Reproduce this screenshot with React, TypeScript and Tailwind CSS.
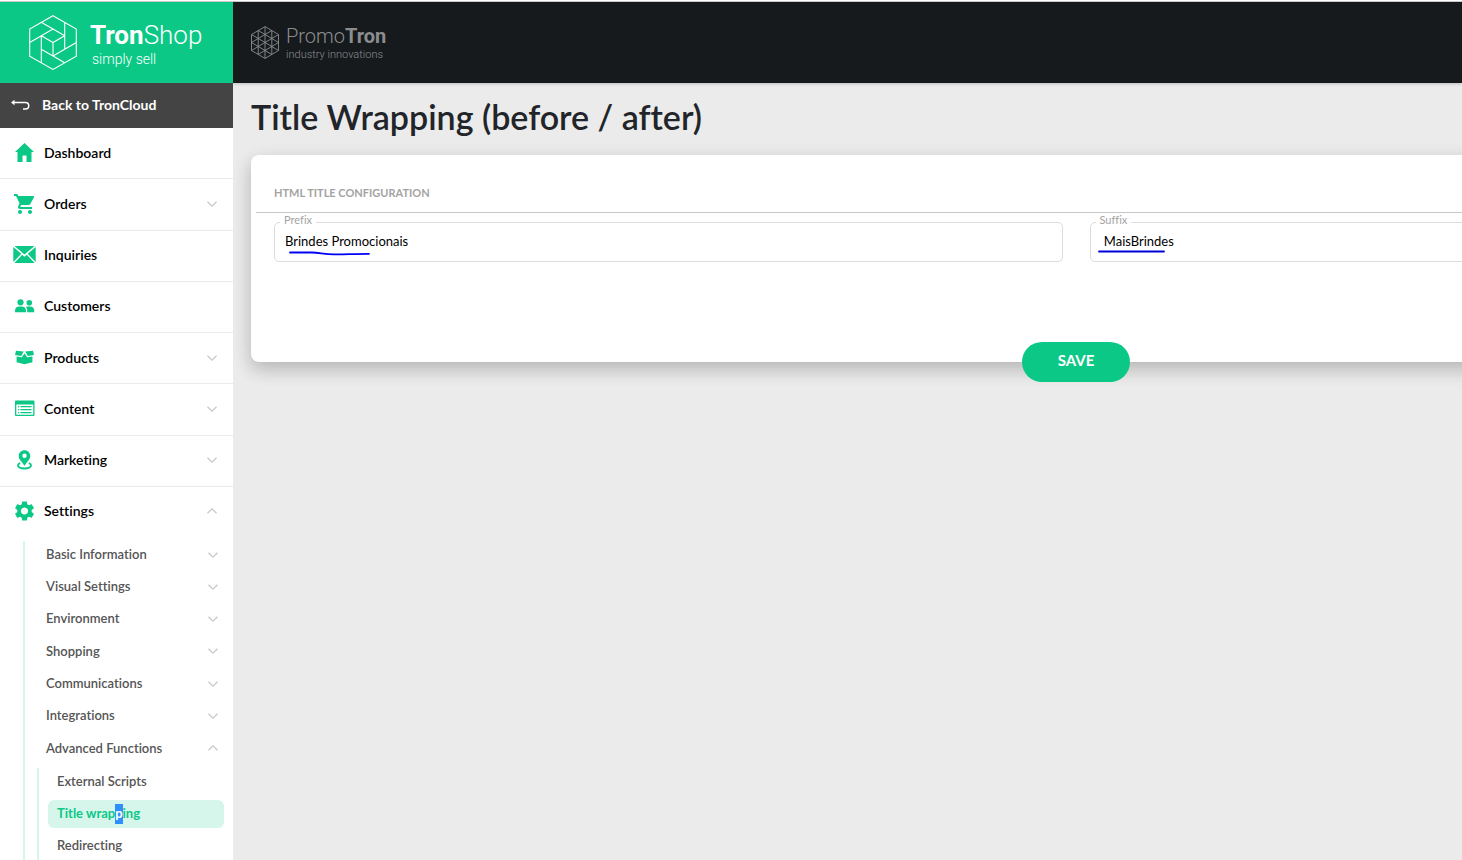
import type { ReactNode } from "react";
import { MdSettings, MdShoppingCart } from "react-icons/md";

const HomeIcon = () => (
    <svg viewBox="0 0 24 24" className="size-6" fill="currentColor">
        <path d="M12.5 2 3 11h2.5v10h5v-6.5h4V21h5V11H22z" />
    </svg>
);

const MailIcon = () => (
    <svg viewBox="0 0 24 24" className="size-6" fill="currentColor">
        <path d="M2.500 3h20l-10 8.600zM1.300 4v15l8-8.200zM23.700 4v15l-8-8.200zM2.300 20l7.900-8.200 2.300 2 2.300-2 7.900 8.200z" />
    </svg>
);

const PeopleIcon = () => (
    <svg viewBox="0 0 24 24" className="size-6" fill="currentColor">
        <circle cx="8.5" cy="8.300" r="3.100" />
        <circle cx="17.300" cy="8.800" r="2.800" />
        <path d="M3 18.300v-1.600c0-2.600 1.800-4.200 4.300-4.200h2.400c2.500 0 4.300 1.600 4.300 4.200v1.600zM15.200 18.300v-1.600c0-1.700-.4-3.100-1.400-4 .7-.2 1.400-.3 2.100-.3h2.400c2.200 0 3.900 1.500 3.900 3.900v2z" />
    </svg>
);

const BoxIcon = () => (
    <svg viewBox="0 0 24 24" className="size-6" fill="currentColor">
        <path d="M4 4.800 11.800 5.400 9.200 10 3 9zM21 4.800l-7.800.6L15.800 10 22 9z" />
        <path d="M4.600 10.400l5.300.9 2.600-4 2.600 4 5.300-.9v5.900l-7.900 1.900-7.900-1.900z" />
    </svg>
);

const ListIcon = () => (
    <svg viewBox="0 0 24 24" className="size-6" fill="currentColor">
        <path fillRule="evenodd" d="M4 3.500h17.500a1 1 0 0 1 1 1V18a1 1 0 0 1-1 1H4a1 1 0 0 1-1-1V4.500a1 1 0 0 1 1-1zM4.300 7.500v10.200h16.900V7.500z" />
        <path d="M6 9h1.300v1.300H6zM8.500 9H19.500v1.300h-11zM6 12h1.300v1.300H6zM8.500 12h11v1.300h-11zM6 15h1.300v1.300H6zM8.500 15h11v1.300h-11z" />
    </svg>
);

const PinIcon = () => (
    <svg viewBox="0 0 24 24" className="size-6" fill="currentColor">
        <path fillRule="evenodd" d="M12.500 2.200c-3.300 0-5.800 2.500-5.800 5.700 0 3.900 4.200 6.400 5.800 9.900 1.600-3.500 5.800-6 5.800-9.900 0-3.200-2.500-5.700-5.800-5.700zm0 3.400a2.200 2.200 0 1 1 0 4.400 2.200 2.200 0 0 1 0-4.400z" />
        <path d="M8.200 15.100c-1.900.7-2.200 1.600-2.200 2.200 0 1.900 2.900 3.200 6.500 3.200s6.500-1.300 6.500-3.200c0-.6-.3-1.500-2.200-2.200" fill="none" stroke="currentColor" strokeWidth="1.900" />
    </svg>
);

const Chevron = ({ up = false }: { up?: boolean }) => (
    <svg viewBox="0 0 10 6" className="w-[10px] h-[6px] shrink-0" fill="none" stroke="#c9c9c9" strokeWidth="1.300">
        <path d={up ? "M.5 5.300 5 .9l4.500 4.400" : "M.5.7 5 5.100 9.500.7"} />
    </svg>
);

const ShopLogo = () => (
    <svg viewBox="0 0 48 55" className="w-12 h-[55px]" fill="none" stroke="#fff" strokeWidth="1.100">
        <path d="M24 .7 47.300 14v27.200L24 54.400.7 41.200V14z" />
        <path d="M35.700 7.300v26.900M12.300 7.300l23.400 13.500M.7 27.500 24 14M12.300 47.800V20.800M35.700 47.800 12.300 34.200M47.300 27.500 24 41" />
        <path d="M24 27.500 35.700 20.800M24 27.500V41M24 27.500 12.300 20.800" />
    </svg>
);

const PromoLogo = () => (
    <svg viewBox="0 0 28 33" className="w-7 h-[33px]" fill="none" stroke="#8b8d8f" strokeWidth=".9">
        <path d="M14 .6 27.500 8.500v16L14 32.400.5 24.500v-16z" />
        <path d="M14 .6v31.800M7.200 4.500v24M20.800 4.500v24M.5 8.500l27 16M27.500 8.500l-27 16M7.200 4.500l20.300 12M20.800 4.500.5 16.500M.5 16.500l20.300 12M27.500 16.500l-20.300 12" />
    </svg>
);

type Item = { label: string; icon: ReactNode; arrow?: "up" | "down" };

const menu: Item[] = [
    { label: "Dashboard", icon: <HomeIcon /> },
    { label: "Orders", icon: <MdShoppingCart className="size-6" viewBox="-1 0 24 24" />, arrow: "down" },
    { label: "Inquiries", icon: <MailIcon /> },
    { label: "Customers", icon: <PeopleIcon /> },
    { label: "Products", icon: <BoxIcon />, arrow: "down" },
    { label: "Content", icon: <ListIcon />, arrow: "down" },
    { label: "Marketing", icon: <PinIcon />, arrow: "down" },
    { label: "Settings", icon: <MdSettings className="size-6" viewBox="-0.5 0 24 24" />, arrow: "up" },
];

const settings = [
    "Basic Information",
    "Visual Settings",
    "Environment",
    "Shopping",
    "Communications",
    "Integrations",
    "Advanced Functions",
];

const Sidebar = () => (
    <aside className="flex flex-col w-[233px] shrink-0 bg-white">
        <a href="#" className="flex items-center h-[81px] shrink-0 gap-[13px] pl-[29px] bg-[#0bc886] text-white font-[Roboto,sans-serif]">
            <ShopLogo />
            <span className="flex flex-col">
                <span className="text-[26px] leading-8 font-light"><b className="font-bold">Tron</b>Shop</span>
                <span className="pl-[2px] text-sm leading-4 font-light">simply sell</span>
            </span>
        </a>
        <a href="#" className="flex items-center h-[45px] shrink-0 gap-3 pl-[11px] pb-[2px] bg-[#444] text-white text-sm font-bold">
            <svg viewBox="0 0 19 12" className="w-[19px] h-3" fill="none" stroke="#fff" strokeWidth="1.500">
                <path d="M3 3.500h11.500a3.200 3.200 0 0 1 0 6.500H12" />
                <path d="M0 3.500 3.500.8v5.400z" fill="#fff" stroke="none" />
            </svg>
            Back to TronCloud
        </a>
        <nav className="flex flex-col flex-1 min-h-0 font-semibold">
            <ul className="grid auto-rows-fr h-[410px] shrink-0 text-sm text-black">
                {menu.map((item) => (
                    <li key={item.label} className="border-b border-[#ebebeb] last:border-transparent">
                        <a href="#" className="flex items-center h-full gap-2 pl-3 pr-4 pb-px">
                            <span className="text-[#0bc886]">{item.icon}</span>
                            <span className="flex-1">{item.label}</span>
                            {item.arrow && <Chevron up={item.arrow === "up"} />}
                        </a>
                    </li>
                ))}
            </ul>
            <div className="flex flex-col flex-1 min-h-0 mt-[3px] ml-[23px] border-l-2 border-[#d6f6ec] text-[13px] text-[#555]">
                <ul className="grid auto-rows-fr gap-1 h-[222px] shrink-0 pl-[21px] pr-[15px]">
                    {settings.map((label) => (
                        <li key={label}>
                            <a href="#" className="flex items-center justify-between h-full pb-px">
                                {label}
                                <Chevron up={label === "Advanced Functions"} />
                            </a>
                        </li>
                    ))}
                </ul>
                <ul className="flex flex-col gap-1 flex-1 min-h-0 mt-[5px] ml-3 pl-[9px] pr-[9px] border-l-2 border-[#d6f6ec]">
                    <li><a href="#" className="flex items-center h-7 px-[9px]">External Scripts</a></li>
                    <li>
                        <a href="#" className="flex items-center h-7 px-[9px] rounded-md bg-[#d6f6ec] text-[#0bc886] font-bold">
                            Title wrap<span className="bg-[#2e8fff] text-white">p</span>ing
                        </a>
                    </li>
                    <li><a href="#" className="flex items-center h-7 px-[9px]">Redirecting</a></li>
                </ul>
            </div>
        </nav>
    </aside>
);

type FieldProps = { id: string; label: string; value: string; children: ReactNode };

const Field = ({ id, label, value, children }: FieldProps) => (
    <div className="relative">
        <label htmlFor={id} className="absolute -top-2 left-[6px] px-1 bg-white text-[11px] leading-3 text-[#a3a3a3]">{label}</label>
        <input id={id} defaultValue={value} className="block w-full h-10 px-[10px] pb-[2px] rounded-[5px] border border-[#dcdcdc] text-[13px] text-black outline-none" />
        {children}
    </div>
);

export default function App() {
    return (
        <div className="flex flex-col h-screen overflow-hidden bg-[#ebebeb] font-[Lato,sans-serif] [font-variant-ligatures:none] text-[#212529]">
            <div className="h-[2px] shrink-0 bg-white border-b border-[#c8c8c8]" />
            <div className="flex flex-1 min-h-0">
                <Sidebar />
                <div className="flex flex-col flex-1 min-w-0 overflow-hidden">
                    <header className="flex items-center h-[81px] shrink-0 gap-[7px] px-[18px] bg-[#161a1d] text-[#8b8d8f] font-[Roboto,sans-serif] shadow-[0_1px_3px_rgba(0,0,0,0.2)]">
                        <PromoLogo />
                        <span className="flex flex-col">
                            <span className="text-xl leading-6 font-light">Promo<b className="font-bold">Tron</b></span>
                            <span className="text-[11px] leading-[14px] font-light">industry innovations</span>
                        </span>
                    </header>
                    {/* the form is laid out for wide screens */}
                    <main className="min-w-[1686px] px-[18px] pt-[10px]">
                        <h1 className="text-[34px] leading-[48px] font-semibold">Title Wrapping (before / after)</h1>
                        <form className="mt-[14px] px-[5px] rounded-lg bg-white shadow-[0_8px_17px_rgba(0,0,0,0.12),0_6px_20px_rgba(0,0,0,0.12)]">
                            <h2 className="px-[18px] pt-[30px] pb-[11px] border-b border-[#c8c8c8] text-[11px] leading-4 font-bold text-[#a3a3a3]">HTML TITLE CONFIGURATION</h2>
                            <div className="grid grid-cols-2 gap-[27px] px-[18px] pt-[9px]">
                                <Field id="prefix" label="Prefix" value="Brindes Promocionais">
                                    <svg viewBox="0 0 82 5" className="absolute left-[15px] top-[29px] w-[82px] h-[5px]" fill="none" stroke="#0000f5" strokeWidth="1.800" strokeLinecap="round">
                                        <path d="M1 1.500h22c8 .3 12 1.700 22 1.900s20-.6 35-.6" />
                                    </svg>
                                </Field>
                                <Field id="suffix" label="Suffix" value=" MaisBrindes">
                                    <svg viewBox="0 0 67 3" className="absolute left-2 top-7 w-[67px] h-[3px]" fill="none" stroke="#0000d8" strokeWidth="1.800" strokeLinecap="round">
                                        <path d="M1 1.500h65" />
                                    </svg>
                                </Field>
                            </div>
                            <div className="flex justify-center pt-20 -mb-5">
                                <button type="submit" className="h-10 px-9 pb-1 -mb-5 rounded-full bg-[#0bc886] text-white text-[15px] font-bold">SAVE</button>
                            </div>
                        </form>
                    </main>
                </div>
            </div>
        </div>
    );
}
